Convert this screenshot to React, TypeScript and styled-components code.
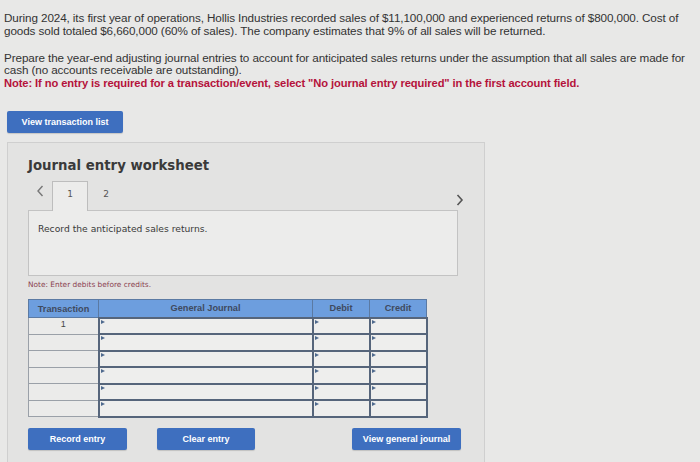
import React from "react";
import styled, { createGlobalStyle } from "styled-components";

const GlobalStyle = createGlobalStyle`
  html, body {
    margin: 0;
    padding: 0;
    background: #e8e8e7;
  }
  body {
    font-family: "Liberation Sans", Arial, sans-serif;
    color: #3a3a3a;
  }
`;

const Page = styled.div`
  padding: 12px 0 0 4px;
  width: 700px;
  overflow: hidden;
  height: 462px;
  box-sizing: border-box;
`;

const Intro = styled.p`
  margin: 0 0 14px;
  width: 686px;
  font-size: 11.7px;
  line-height: 12.8px;
  color: #333;
  letter-spacing: -0.1px;
`;

const Warning = styled.strong`
  display: block;
  color: #b5123b;
  font-weight: bold;
  font-size: 11.2px;
`;

const BlueButton = styled.button<{ $width: number }>`
  width: ${(p) => p.$width}px;
  height: 22px;
  border: 0;
  border-radius: 2px;
  background: #3e6fbf;
  color: #fff;
  font-family: "Liberation Sans", Arial, sans-serif;
  font-weight: bold;
  font-size: 9px;
  padding: 0;
  cursor: pointer;
  box-shadow: 0 1px 1px rgba(0, 0, 0, 0.15);
`;

const TopButtonRow = styled.div`
  margin: 21px 0 0 3px;
  height: 22px;
`;

const Panel = styled.section`
  margin: 9px 0 0 3px;
  width: 478px;
  box-sizing: border-box;
  border: 1px solid #cfcfcf;
  background: #e3e3e2;
  padding: 15px 0 20px 20px;
`;

const Title = styled.h2`
  margin: 0 0 8px;
  font-family: "DejaVu Sans", Verdana, sans-serif;
  font-size: 13.3px;
  font-weight: bold;
  color: #3a3a3a;
`;

const TabRow = styled.div`
  display: flex;
  align-items: flex-end;
  width: 438px;
  height: 29px;
  font-family: "DejaVu Sans", Verdana, sans-serif;
`;

const Arrow = styled.span<{ $right?: boolean }>`
  display: flex;
  align-items: center;
  justify-content: center;
  width: 24px;
  height: 20px;
  align-self: center;
  margin-left: ${(p) => (p.$right ? "auto" : "0")};
  margin-right: ${(p) => (p.$right ? "-6px" : "0")};
  margin-top: ${(p) => (p.$right ? "10px" : "-8px")};
`;

const Tab = styled.div<{ $active?: boolean }>`
  width: 36px;
  height: 30px;
  box-sizing: border-box;
  display: flex;
  justify-content: center;
  padding-top: 7px;
  font-size: 9px;
  color: #555;
  background: ${(p) => (p.$active ? "#ececeb" : "transparent")};
  border: 1px solid ${(p) => (p.$active ? "#bdbdbd" : "transparent")};
  border-bottom: 0;
  margin-bottom: -1px;
  position: relative;
  z-index: 1;
`;

const TaskBox = styled.div`
  width: 430px;
  height: 66px;
  box-sizing: border-box;
  border: 1px solid #c3c3c3;
  background: #ececeb;
  padding: 12px 9px;
  font-family: "DejaVu Sans", Verdana, sans-serif;
  font-size: 9.2px;
  color: #3a3a3a;
`;

const Note = styled.div`
  margin: 4px 0 10px;
  font-family: "DejaVu Sans", Verdana, sans-serif;
  font-size: 7.4px;
  color: #8a3e4e;
`;

const Table = styled.table`
  border-collapse: collapse;
  table-layout: fixed;
  width: 394px;
`;

const Head = styled.th<{ $w: number }>`
  width: ${(p) => p.$w}px;
  height: 17px;
  padding: 0;
  background: #6d9ede;
  border: 1px solid #5b7aa3;
  font-family: "Liberation Sans", Arial, sans-serif;
  font-size: 9.2px;
  font-weight: bold;
  color: #3f4a5e;
  vertical-align: middle;
  line-height: 12px;
`;

const NumCell = styled.td`
  height: 14.5px;
  padding: 0;
  border: 1px solid #9aa0a8;
  background: #ebebea;
  text-align: center;
  vertical-align: top;
  font-size: 9px;
  color: #444;
  line-height: 12px;
`;

const InputCell = styled.td`
  height: 14.5px;
  padding: 0;
  border: 2px solid #56657b;
  background: #eeeeed;
  position: relative;

  &::before {
    content: "";
    position: absolute;
    top: 1px;
    left: 1px;
    border-top: 2.5px solid transparent;
    border-bottom: 2.5px solid transparent;
    border-left: 4px solid #4f6a8e;
  }
`;

const ButtonRow = styled.div`
  display: flex;
  margin-top: 10px;
`;

const Spacer = styled.div<{ $w: number }>`
  width: ${(p) => p.$w}px;
`;

const ChevronLeft = () => (
  <svg width="10" height="14" viewBox="0 0 10 14">
    <path d="M7.5 2 L3 7 L7.5 12" fill="none" stroke="#777" strokeWidth="1.4" />
  </svg>
);

const ChevronRight = () => (
  <svg width="10" height="14" viewBox="0 0 10 14">
    <path d="M2.5 2 L7 7 L2.5 12" fill="none" stroke="#555" strokeWidth="1.6" />
  </svg>
);

const rows = [0, 1, 2, 3, 4, 5];

export default function App() {
  return (
    <Page>
      <GlobalStyle />
      <Intro>
        During 2024, its first year of operations, Hollis Industries recorded sales of $11,100,000 and experienced
        returns of $800,000. Cost of goods sold totaled $6,660,000 (60% of sales). The company estimates that 9% of
        all sales will be returned.
      </Intro>
      <Intro>
        Prepare the year-end adjusting journal entries to account for anticipated sales returns under the
        assumption that all sales are made for cash (no accounts receivable are outstanding).
        <Warning>
          Note: If no entry is required for a transaction/event, select "No journal entry required" in the first
          account field.
        </Warning>
      </Intro>

      <TopButtonRow>
        <BlueButton $width={116}>View transaction list</BlueButton>
      </TopButtonRow>

      <Panel>
        <Title>Journal entry worksheet</Title>
        <TabRow>
          <Arrow>
            <ChevronLeft />
          </Arrow>
          <Tab $active>1</Tab>
          <Tab>2</Tab>
          <Arrow $right>
            <ChevronRight />
          </Arrow>
        </TabRow>
        <TaskBox>Record the anticipated sales returns.</TaskBox>
        <Note>Note: Enter debits before credits.</Note>

        <Table>
          <thead>
            <tr>
              <Head $w={69}>Transaction</Head>
              <Head $w={213}>General Journal</Head>
              <Head $w={56}>Debit</Head>
              <Head $w={56}>Credit</Head>
            </tr>
          </thead>
          <tbody>
            {rows.map((r) => (
              <tr key={r}>
                <NumCell>{r === 0 ? "1" : ""}</NumCell>
                <InputCell />
                <InputCell />
                <InputCell />
              </tr>
            ))}
          </tbody>
        </Table>

        <ButtonRow>
          <BlueButton $width={99}>Record entry</BlueButton>
          <Spacer $w={30} />
          <BlueButton $width={98}>Clear entry</BlueButton>
          <Spacer $w={97} />
          <BlueButton $width={109}>View general journal</BlueButton>
        </ButtonRow>
      </Panel>
    </Page>
  );
}
